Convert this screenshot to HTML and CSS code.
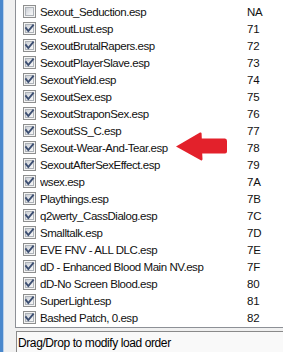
FILE: index.html
```html
<!DOCTYPE html>
<html>
<head>
<meta charset="utf-8">
<link rel="stylesheet" href="styles.css">
</head>
<body>
<div class="window">
  <div class="frame"></div>
  <div class="content">
    <div class="list">
      <div class="row"><span class="cb"></span><span class="name">Sexout_Seduction.esp</span><span class="idx">NA</span></div>
      <div class="row"><span class="cb on"><svg viewBox="0 0 13 13"><path d="M3 6.2 L5.3 9 L10 3.4"/></svg></span><span class="name">SexoutLust.esp</span><span class="idx">71</span></div>
      <div class="row"><span class="cb on"><svg viewBox="0 0 13 13"><path d="M3 6.2 L5.3 9 L10 3.4"/></svg></span><span class="name">SexoutBrutalRapers.esp</span><span class="idx">72</span></div>
      <div class="row"><span class="cb on"><svg viewBox="0 0 13 13"><path d="M3 6.2 L5.3 9 L10 3.4"/></svg></span><span class="name">SexoutPlayerSlave.esp</span><span class="idx">73</span></div>
      <div class="row"><span class="cb on"><svg viewBox="0 0 13 13"><path d="M3 6.2 L5.3 9 L10 3.4"/></svg></span><span class="name">SexoutYield.esp</span><span class="idx">74</span></div>
      <div class="row"><span class="cb on"><svg viewBox="0 0 13 13"><path d="M3 6.2 L5.3 9 L10 3.4"/></svg></span><span class="name">SexoutSex.esp</span><span class="idx">75</span></div>
      <div class="row"><span class="cb on"><svg viewBox="0 0 13 13"><path d="M3 6.2 L5.3 9 L10 3.4"/></svg></span><span class="name">SexoutStraponSex.esp</span><span class="idx">76</span></div>
      <div class="row"><span class="cb on"><svg viewBox="0 0 13 13"><path d="M3 6.2 L5.3 9 L10 3.4"/></svg></span><span class="name">SexoutSS_C.esp</span><span class="idx">77</span></div>
      <div class="row"><span class="cb on"><svg viewBox="0 0 13 13"><path d="M3 6.2 L5.3 9 L10 3.4"/></svg></span><span class="name">Sexout-Wear-And-Tear.esp</span><span class="idx">78</span></div>
      <div class="row"><span class="cb on"><svg viewBox="0 0 13 13"><path d="M3 6.2 L5.3 9 L10 3.4"/></svg></span><span class="name">SexoutAfterSexEffect.esp</span><span class="idx">79</span></div>
      <div class="row"><span class="cb on"><svg viewBox="0 0 13 13"><path d="M3 6.2 L5.3 9 L10 3.4"/></svg></span><span class="name">wsex.esp</span><span class="idx">7A</span></div>
      <div class="row"><span class="cb on"><svg viewBox="0 0 13 13"><path d="M3 6.2 L5.3 9 L10 3.4"/></svg></span><span class="name">Playthings.esp</span><span class="idx">7B</span></div>
      <div class="row"><span class="cb on"><svg viewBox="0 0 13 13"><path d="M3 6.2 L5.3 9 L10 3.4"/></svg></span><span class="name">q2werty_CassDialog.esp</span><span class="idx">7C</span></div>
      <div class="row"><span class="cb on"><svg viewBox="0 0 13 13"><path d="M3 6.2 L5.3 9 L10 3.4"/></svg></span><span class="name">Smalltalk.esp</span><span class="idx">7D</span></div>
      <div class="row"><span class="cb on"><svg viewBox="0 0 13 13"><path d="M3 6.2 L5.3 9 L10 3.4"/></svg></span><span class="name">EVE FNV - ALL DLC.esp</span><span class="idx">7E</span></div>
      <div class="row"><span class="cb on"><svg viewBox="0 0 13 13"><path d="M3 6.2 L5.3 9 L10 3.4"/></svg></span><span class="name">dD - Enhanced Blood Main NV.esp</span><span class="idx">7F</span></div>
      <div class="row"><span class="cb on"><svg viewBox="0 0 13 13"><path d="M3 6.2 L5.3 9 L10 3.4"/></svg></span><span class="name">dD-No Screen Blood.esp</span><span class="idx">80</span></div>
      <div class="row"><span class="cb on"><svg viewBox="0 0 13 13"><path d="M3 6.2 L5.3 9 L10 3.4"/></svg></span><span class="name">SuperLight.esp</span><span class="idx">81</span></div>
      <div class="row"><span class="cb on"><svg viewBox="0 0 13 13"><path d="M3 6.2 L5.3 9 L10 3.4"/></svg></span><span class="name">Bashed Patch, 0.esp</span><span class="idx">82</span></div>
    </div>
    <div class="status">Drag/Drop to modify load order</div>
  </div>
  <svg class="arrow" width="54" height="32" viewBox="0 0 54 32">
    <path d="M0 14.5 L24 0.5 Q25.5 0 25.6 1.5 L25.8 6.5 L49 6.5 Q51 6.6 51 9 L51 19.5 Q51 21.5 49 21.5 L26.2 21.5 L26.5 27 Q26.5 29 24.8 28.2 Z"/>
  </svg>
</div>
</body>
</html>
```
FILE: styles.css
```css
html, body {
  margin: 0;
  padding: 0;
  width: 283px;
  height: 352px;
  overflow: hidden;
  background: #f0f0f0;
}

.window {
  position: relative;
  display: flex;
  width: 283px;
  height: 352px;
  font-family: "Liberation Sans", Arial, sans-serif;
  color: #000;
}

.frame {
  width: 3px;
  background: #4a88cc;
  border-right: 1px solid #b9d0ea;
  flex: none;
}

.content {
  flex: 1;
  display: flex;
  flex-direction: column;
  padding-left: 11px;
  background: #f0f0f0;
}

.list {
  height: 328px;
  padding-top: 3px;
  background: #fff;
  border-left: 1px solid #8d9096;
  border-bottom: 1px solid #8d9096;
  display: flex;
  flex-direction: column;
  overflow: hidden;
}

.row {
  height: 17px;
  display: grid;
  grid-template-columns: 13px 203px auto;
  column-gap: 4px;
  align-items: center;
  padding-left: 7px;
  font-size: 11.5px;
  letter-spacing: -0.45px;
  white-space: nowrap;
  color: #111;
}

.idx {
  letter-spacing: -0.2px;
}

.cb {
  position: relative;
  width: 13px;
  height: 13px;
  box-sizing: border-box;
  border: 1px solid #8e8f8f;
  background: #f4f4f4;
}

.cb::before {
  content: "";
  position: absolute;
  left: 1px;
  top: 1px;
  right: 1px;
  bottom: 1px;
  border: 1px solid #aeb3b9;
  background: linear-gradient(135deg, #cbcfd5 0%, #e9ebee 60%, #f6f6f6 100%);
}

.cb svg {
  position: absolute;
  left: -1px;
  top: -1px;
  width: 13px;
  height: 13px;
}

.cb svg path {
  fill: none;
  stroke: #3d4f72;
  stroke-width: 1.9;
  stroke-linecap: square;
}

.name {
  overflow: hidden;
}

.status {
  margin-top: 3px;
  margin-left: 1px;
  flex: 1;
  border-top: 1px solid #8a8a8a;
  border-left: 1px solid #8a8a8a;
  background: #f9f9f9;
  padding: 3px 0 0 1px;
  font-size: 12px;
  line-height: 17px;
  letter-spacing: -0.4px;
  white-space: nowrap;
}

.arrow {
  position: absolute;
  left: 176px;
  top: 132px;
}

.arrow path {
  fill: #e3212b;
}
```
